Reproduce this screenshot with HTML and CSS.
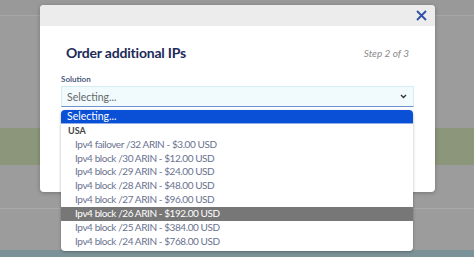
FILE: index.html
```html
<!DOCTYPE html>
<html>
<head>
<meta charset="utf-8">
<link rel="stylesheet" href="styles.css">
</head>
<body>
<div class="page">
  <div class="topbar"></div>
  <div class="gap1"></div>
  <div class="band"></div>
  <div class="gap2"><div class="line"></div></div>
  <div class="foot"></div>
</div>

<div class="modal">
  <div class="modal-head">
    <svg class="close" width="11" height="11" viewBox="0 0 11 11"><path d="M1 1 L10 10 M10 1 L1 10" stroke="#2f4fa6" stroke-width="1.8" fill="none"/></svg>
  </div>
  <div class="modal-body">
    <div class="title-row">
      <h1 class="title">Order additional IPs</h1>
      <span class="step">Step 2 of 3</span>
    </div>
    <label class="label">Solution</label>
    <div class="select">
      <span class="select-text">Selecting...</span>
      <svg class="chev" width="7" height="5" viewBox="0 0 7 5"><path d="M1 1 L3.5 3.5 L6 1" stroke="#333" stroke-width="1.4" fill="none"/></svg>
    </div>
  </div>
</div>

<ul class="dropdown">
  <li class="opt sel">Selecting...</li>
  <li class="group">USA</li>
  <li class="opt sub">Ipv4 failover /32 ARIN - $3.00 USD</li>
  <li class="opt sub">Ipv4 block /30 ARIN - $12.00 USD</li>
  <li class="opt sub">Ipv4 block /29 ARIN - $24.00 USD</li>
  <li class="opt sub">Ipv4 block /28 ARIN - $48.00 USD</li>
  <li class="opt sub">Ipv4 block /27 ARIN - $96.00 USD</li>
  <li class="opt sub hover">Ipv4 block /26 ARIN - $192.00 USD</li>
  <li class="opt sub">Ipv4 block /25 ARIN - $384.00 USD</li>
  <li class="opt sub">Ipv4 block /24 ARIN - $768.00 USD</li>
</ul>
</body>
</html>
```

FILE: styles.css
```css
* { box-sizing: border-box; }
html, body { margin: 0; padding: 0; }
body {
  width: 474px;
  height: 257px;
  overflow: hidden;
  position: relative;
  font-family: Lato, "Open Sans", sans-serif;
  background: #9c9c9c;
}
.page { display: flex; flex-direction: column; height: 257px; }
.topbar { height: 16px; background: #999999; border-bottom: 1px solid #a6a6a6; flex: none; }
.gap1 { height: 112px; flex: none; }
.band { height: 37px; background: #8c967b; flex: none; }
.gap2 { flex: 1; position: relative; }
.line { margin-top: 43px; height: 1px; background: #a7aaa8; }
.foot { height: 7px; background: #7b9398; flex: none; }

.modal {
  position: absolute;
  left: 40px;
  top: 5px;
  width: 395px;
  height: 187px;
  background: #fff;
  border-radius: 4px;
  box-shadow: 0 1px 4px rgba(0,0,0,0.25);
  overflow: hidden;
}
.modal-head {
  height: 21px;
  background: #ececec;
  display: flex;
  justify-content: flex-end;
  align-items: center;
  padding-right: 8px;
}
.modal-body { padding: 15px 21px 0 21px; }
.title-row {
  display: flex;
  justify-content: space-between;
  align-items: center;
  padding-left: 5px;
  padding-right: 5px;
  height: 22px;
}
.title {
  margin: 0;
  font-size: 14px;
  font-weight: 700;
  color: #1d2a58;
  letter-spacing: -0.2px;
}
.step {
  font-size: 10px;
  font-style: italic;
  color: #8a8a8a;
  margin-top: 2px;
}
.label {
  display: block;
  margin-top: 11px;
  font-size: 8px;
  font-weight: 700;
  color: #4d5a80;
  height: 10px;
  line-height: 10px;
}
.select {
  margin-top: 2px;
  height: 21px;
  background: #f1fbfe;
  border: 1px solid #d5eef5;
  border-bottom: 1px solid #6f90cf;
  display: flex;
  align-items: center;
  justify-content: space-between;
  padding: 0 6px 0 5px;
}
.select-text { font-size: 10.5px; color: #666; }

.dropdown {
  position: absolute;
  left: 61px;
  top: 110px;
  width: 352px;
  margin: 0;
  padding: 0 0 2px 0;
  list-style: none;
  background: #fff;
  border-radius: 4px;
  box-shadow: 0 1px 3px rgba(0,0,0,0.3);
  overflow: hidden;
  font-size: 10px;
  letter-spacing: -0.42px;
}
.opt, .group {
  height: 13.86px;
  line-height: 13.86px;
  padding-left: 6px;
  color: #6a7290;
  white-space: nowrap;
}
.sel { background: #0a50d6; color: #fff; font-size: 10.5px; letter-spacing: 0; border-bottom: 1px solid #8fb0e6; }
.group { font-weight: 700; color: #444; font-size: 9px; padding-left: 7px; letter-spacing: 0; }
.sub { padding-left: 14px; }
.hover { background: #777777; color: #fff; }
```
